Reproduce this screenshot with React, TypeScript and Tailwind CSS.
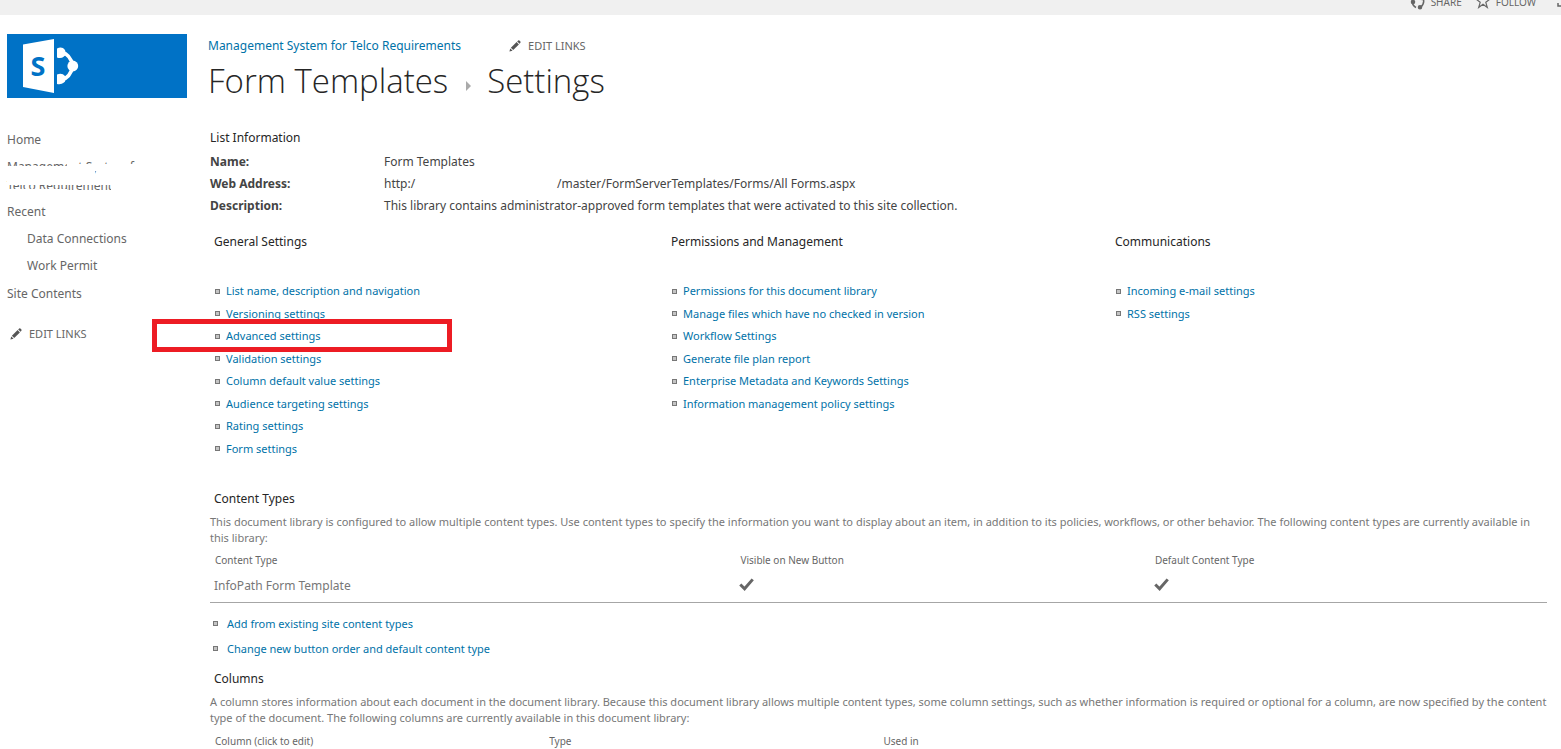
import type { ReactNode } from "react";

const generalSettings = [
  "List name, description and navigation",
  "Versioning settings",
  "Advanced settings",
  "Validation settings",
  "Column default value settings",
  "Audience targeting settings",
  "Rating settings",
  "Form settings",
];

const permissionSettings = [
  "Permissions for this document library",
  "Manage files which have no checked in version",
  "Workflow Settings",
  "Generate file plan report",
  "Enterprise Metadata and Keywords Settings",
  "Information management policy settings",
];

const communicationSettings = ["Incoming e-mail settings", "RSS settings"];

function Pencil() {
  return (
    <svg className="size-3 shrink-0" viewBox="0 0 12 12" fill="#555" aria-hidden="true">
      <path d="M0.4 11.6 1.3 8.4 3.6 10.7Z" />
      <path d="M1.9 7.8 7.6 2.1 9.9 4.4 4.2 10.1Z" />
      <path d="M8.2 1.5 9.2 0.6Q9.8 0.1 10.4 0.6L11.4 1.6Q11.9 2.2 11.4 2.8L10.5 3.8Z" />
    </svg>
  );
}

function Check() {
  return (
    <svg className="mb-[3px] h-[13px] w-[15px]" viewBox="0 0 14 12" fill="none" stroke="#666" strokeWidth="2.800" role="img" aria-label="Yes">
      <path d="M1.200 6 5.200 10 12.800 1.200" />
    </svg>
  );
}

function Bullet() {
  return <span className="size-[5px] shrink-0 border border-[#777] bg-[#c4c4c4]" aria-hidden="true" />;
}

function Logo() {
  return (
    <svg className="block h-16 w-[180px]" viewBox="0 0 180 64" role="img" aria-label="SharePoint">
      <rect width="180" height="64" fill="#0072c6" />
      <path d="M16 10.5 47 5V59L16 53Z" fill="#fff" />
      <g stroke="#fff" fill="none">
        <path d="M55 18.500 Q63 20 66 32" strokeWidth="3.600" />
        <path d="M55 45.500 Q63 44 66 32" strokeWidth="3.600" />
      </g>
      <path d="M50 14.500Q55 12 58 16Q59.500 20 57 22.500Q54 25 50 23.500Z" fill="#fff" />
      <path d="M50 40.500Q55 38.500 58 42Q59.500 46 57 48.500Q54 51 50 50Z" fill="#fff" />
      <circle cx="65.800" cy="32" r="5.400" fill="#fff" />
      <text x="23.500" y="42" fontFamily="Noto Sans, sans-serif" fontWeight="700" fontSize="27" fill="#0072c6">
        S
      </text>
    </svg>
  );
}

function NavLink({ children }: { children: ReactNode }) {
  return (
    <a href="#" className="block">
      {children}
    </a>
  );
}

function SettingsGroup({ title, items, marked }: { title: string; items: string[]; marked?: string }) {
  return (
    <section className="pl-1">
      <h3 className="text-[12px] leading-4 text-[#262626]">{title}</h3>
      <ul className="mt-[30px]">
        {items.map((item) => (
          <li key={item} className="relative flex h-[23px] items-center gap-[6px] pl-[1px] nth-[2n+1]:h-[22px]">
            <Bullet />
            <a href="#" className="text-[11px] leading-4 text-[#0072a8]">
              {item}
            </a>
            {item === marked && (
              <span className="pointer-events-none absolute -top-[6px] -left-[62px] h-[33px] w-[300px] border-[5px] border-[#ed1c24]" />
            )}
          </li>
        ))}
      </ul>
    </section>
  );
}

export default function App() {
  return (
    <div className="bg-white font-['Noto_Sans','Open_Sans',sans-serif] text-[12px] leading-4 text-[#666]">
      <header className="flex h-[15px] items-end justify-end overflow-hidden bg-[#f0f0f0] pb-[5px] text-[10px]">
        <div className="flex shrink-0 items-center">
          <button className="flex items-center gap-[5px]">
            <svg className="size-4" viewBox="0 0 16 16" fill="none" stroke="#666" strokeWidth="1.500" aria-hidden="true">
              <path d="M2.500 5.500Q1.500 11 6 13.500M13.500 5.500Q14.500 10 10.500 13.500M5 2.500Q8 1 11 2.500" />
              <circle cx="3" cy="8" r="1.500" fill="#666" />
              <circle cx="10" cy="13.200" r="1.500" fill="#666" />
              <circle cx="12.500" cy="4" r="1.500" fill="#666" />
            </svg>
            SHARE
          </button>
          <button className="ml-[13px] flex items-center gap-[5px]">
            <svg className="size-4" viewBox="0 0 16 16" fill="none" stroke="#666" strokeWidth="1.200" aria-hidden="true">
              <path d="M8 0.500 9.800 5.200H14.800L10.800 8.300 12.300 13.500 8 10.300 3.700 13.500 5.200 8.300 1.200 5.200H6.200Z" />
            </svg>
            FOLLOW
          </button>
          <button aria-label="Focus on content" className="ml-[21px] w-1 overflow-hidden">
            <svg className="h-4 w-4" viewBox="0 0 16 16" fill="none" stroke="#666" strokeWidth="1.500" aria-hidden="true">
              <path d="M1 9V12H5" />
            </svg>
          </button>
        </div>
      </header>

      <div className="flex pt-[19px] pr-[14px] pl-[7px]">
        <aside className="w-[201px] shrink-0">
          <Logo />
          <nav className="mt-[34px]">
            <NavLink>Home</NavLink>
            <div className="relative mt-[9px] leading-[19px]">
              <NavLink>
                Management System for
                <br />
                Telco Requirements
              </NavLink>
              <svg className="absolute top-0 left-0 h-[38px] w-[160px]" viewBox="0 0 160 38" fill="#fff" aria-hidden="true">
                <path d="M0 9H60V7H160V14H0Z" />
                <path d="M0 14H88V18H160V24H0Z" />
                <path d="M98 14H160V20H98Z" />
                <path d="M0 24H160V28H0Z" />
                <path d="M104 24H160V38H104Z" />
                <path d="M0 32H60V35H104V38H0Z" />
              </svg>
            </div>
            <div className="mt-[9px]">
              <NavLink>Recent</NavLink>
            </div>
            <div className="mt-[11px] flex flex-col gap-[11px] pl-5">
              <NavLink>Data Connections</NavLink>
              <NavLink>Work Permit</NavLink>
            </div>
            <div className="mt-3">
              <NavLink>Site Contents</NavLink>
            </div>
            <button className="mt-6 ml-[3px] flex items-center gap-[7px] text-[11px]">
              <Pencil />
              EDIT LINKS
            </button>
          </nav>
        </aside>

        <main className="min-w-0 flex-1">
          <div className="flex items-center pt-1">
            <a href="#" className="text-[#0072a8]">
              Management System for Telco Requirements
            </a>
            <button className="ml-12 flex items-center gap-[7px] text-[11px]">
              <Pencil />
              EDIT LINKS
            </button>
          </div>
          <h1 className="flex items-center font-['Open_Sans',sans-serif] text-[33px] leading-[54px] font-light text-[#262626]">
            Form Templates
            <svg className="mt-[10px] mr-4 ml-[18px] h-[10px] w-[5px]" viewBox="0 0 5 10" fill="#aaa" aria-hidden="true">
              <path d="M0 0 5 5 0 10Z" />
            </svg>
            Settings
          </h1>

          <div className="pl-[2px]">
            <h2 className="mt-[22px] text-[#262626]">List Information</h2>
            <dl className="mt-2 grid grid-cols-[174px_1fr] gap-y-[6px] text-[#444]">
              <dt className="font-bold">Name:</dt>
              <dd>Form Templates</dd>
              <dt className="font-bold">Web Address:</dt>
              <dd className="flex">
                <span className="w-[173px]">http:/</span>
                <span>/master/FormServerTemplates/Forms/All Forms.aspx</span>
              </dd>
              <dt className="font-bold">Description:</dt>
              <dd>This library contains administrator-approved form templates that were activated to this site collection.</dd>
            </dl>

            <div className="mt-5 grid grid-cols-[457fr_444fr_436fr]">
              <SettingsGroup title="General Settings" items={generalSettings} marked="Advanced settings" />
              <SettingsGroup title="Permissions and Management" items={permissionSettings} />
              <SettingsGroup title="Communications" items={communicationSettings} />
            </div>

            <section>
              <h2 className="mt-[31px] pl-1 text-[#262626]">Content Types</h2>
              <p className="mt-[7px] text-[11px] text-[#777]">
                This document library is configured to allow multiple content types. Use content types to specify the
                information you want to display about an item, in addition to its policies, workflows, or other behavior.
                The following content types are currently available in this library:
              </p>
              <table className="mt-1 w-full table-fixed border-b border-[#a6a6a6] text-left">
                <thead className="text-[10px]">
                  <tr className="h-5">
                    <th className="w-[39.3%] pl-[5px] font-normal">Content Type</th>
                    <th className="w-[31%] pl-[5px] font-normal">Visible on New Button</th>
                    <th className="pl-[5px] font-normal">Default Content Type</th>
                  </tr>
                </thead>
                <tbody>
                  <tr className="h-8 align-middle">
                    <td className="pl-1 text-[#777]">InfoPath Form Template</td>
                    <td className="pl-1">
                      <Check />
                    </td>
                    <td className="pl-1">
                      <Check />
                    </td>
                  </tr>
                </tbody>
              </table>
              <ul className="mt-[13px] flex flex-col gap-[9px] pl-[3px] text-[11px]">
                {["Add from existing site content types", "Change new button order and default content type"].map((item) => (
                  <li key={item} className="flex items-center gap-[9px]">
                    <Bullet />
                    <a href="#" className="text-[#0072a8]">
                      {item}
                    </a>
                  </li>
                ))}
              </ul>
            </section>

            <section>
              <h2 className="mt-[14px] pl-1 text-[#262626]">Columns</h2>
              <p className="mt-[7px] text-[11px] text-[#777]">
                A column stores information about each document in the document library. Because this document library
                allows multiple content types, some column settings, such as whether information is required or optional
                for a column, are now specified by the content type of the document. The following columns are currently
                available in this document library:
              </p>
              <table className="mt-[7px] w-full table-fixed text-left text-[10px]">
                <thead>
                  <tr className="h-4">
                    <th className="w-1/4 pl-[5px] font-normal">Column (click to edit)</th>
                    <th className="w-1/4 pl-[5px] font-normal">Type</th>
                    <th className="pl-[5px] font-normal">Used in</th>
                  </tr>
                </thead>
              </table>
            </section>
          </div>
        </main>
      </div>
    </div>
  );
}
